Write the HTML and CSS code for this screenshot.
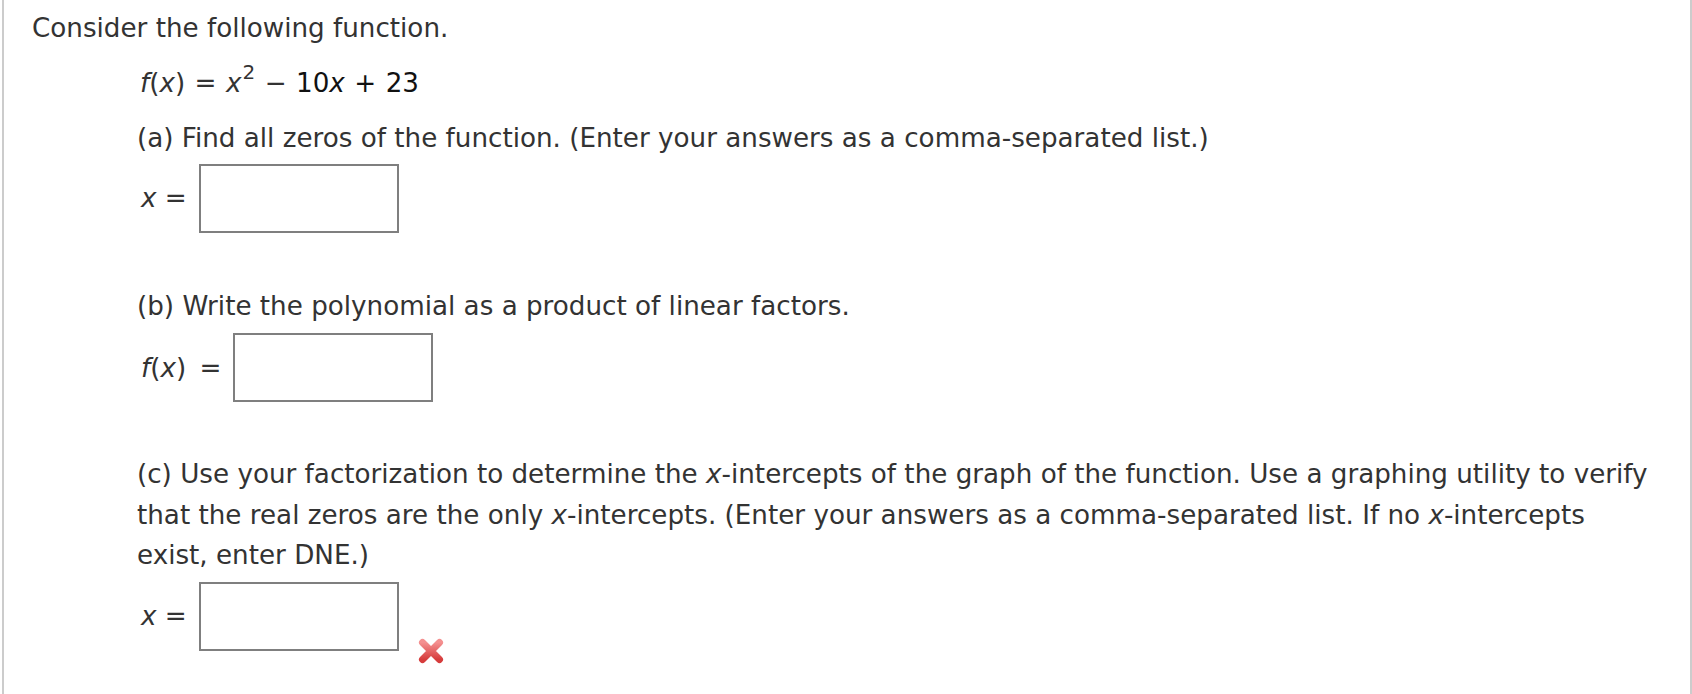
FILE: index.html
```html
<!DOCTYPE html>
<html lang="en">
<head>
<meta charset="utf-8">
<title>Question</title>
<link rel="stylesheet" href="styles.css">
</head>
<body>
<div class="question">
  <p class="intro">Consider the following function.</p>
  <div class="parts">
    <p class="equation"><span class="mi">f</span>(<span class="mi">x</span>)<span class="op">=</span><span class="mi">x</span><sup>2</sup><span class="op">−</span><span class="dark">10<span class="mi">x</span><span class="op">+</span>23</span></p>

    <div class="part part-a">
      <p class="prompt">(a) Find all zeros of the function. (Enter your answers as a comma-separated list.)</p>
      <div class="answer">
        <span class="label"><span class="mi">x</span> =</span>
        <span class="box"></span>
      </div>
    </div>

    <div class="part part-b">
      <p class="prompt">(b) Write the polynomial as a product of linear factors.</p>
      <div class="answer">
        <span class="label label-fx"><span class="mi">f</span>(<span class="mi">x</span>) =</span>
        <span class="box"></span>
      </div>
    </div>

    <div class="part part-c">
      <p class="prompt">(c) Use your factorization to determine the <span class="mi">x</span>-intercepts of the graph of the function. Use a graphing utility to verify that the real zeros are the only <span class="mi">x</span>-intercepts. (Enter your answers as a comma-separated list. If no <span class="mi">x</span>-intercepts exist, enter DNE.)</p>
      <div class="answer">
        <span class="label"><span class="mi">x</span> =</span>
        <span class="box"></span>
        <svg class="wrong" width="28" height="28" viewBox="0 0 28 28" aria-label="incorrect">
          <defs>
            <linearGradient id="xg" x1="0" y1="0" x2="0" y2="1">
              <stop offset="0" stop-color="#f49090"/>
              <stop offset="1" stop-color="#d63c3c"/>
            </linearGradient>
          </defs>
          <path d="M5.5 5.5 L22.5 22.5 M22.5 5.5 L5.5 22.5" stroke="url(#xg)" stroke-width="7" stroke-linecap="round" fill="none"/>
        </svg>
      </div>
    </div>
  </div>
</div>
</body>
</html>
```

FILE: styles.css
```css
html, body {
  margin: 0;
  padding: 0;
  background: #ffffff;
}

body {
  width: 1692px;
  height: 694px;
  overflow: hidden;
  font-family: "DejaVu Sans", Verdana, sans-serif;
  font-size: 26.2px;
  color: #333333;
}

.question {
  box-sizing: border-box;
  margin-left: 2px;
  height: 694px;
  border-left: 2px solid #cccccc;
  border-right: 2px solid #cccccc;
  padding: 8px 33px 0 28px;
}

.intro {
  margin: 0;
  line-height: 40px;
}

.parts {
  margin-left: 105px;
}

.equation {
  margin: 15px 0 0 0;
  padding-left: 3px;
  line-height: 40px;
}

.mi {
  font-style: italic;
}

.op {
  margin: 0 0.36em;
}

.equation sup {
  font-size: 20px;
  line-height: 0;
  position: relative;
  top: -3px;
  margin-left: 1px;
  vertical-align: super;
}

.dark {
  color: #111111;
}

.prompt {
  margin: 0;
  line-height: 40.5px;
}

.part-a .prompt {
  margin-top: 15px;
}

.part-b .prompt {
  margin-top: 53px;
}

.part-c .prompt {
  margin-top: 52px;
}

.answer {
  display: flex;
  align-items: center;
  padding-left: 4px;
}

.part-a .answer {
  margin-top: 5px;
}

.part-b .answer {
  margin-top: 7px;
}

.part-c .answer {
  margin-top: 6px;
  align-items: flex-start;
}

.label {
  line-height: 40px;
  margin-right: 12px;
  white-space: pre;
}

.label-fx {
  word-spacing: 5px;
}

.part-c .label {
  margin-top: 14px;
}

.box {
  box-sizing: border-box;
  display: block;
  width: 200px;
  height: 69px;
  border: 2px solid #7f7f7f;
  background: #ffffff;
}

.wrong {
  display: block;
  margin-left: 18px;
  margin-top: 55px;
}
```
